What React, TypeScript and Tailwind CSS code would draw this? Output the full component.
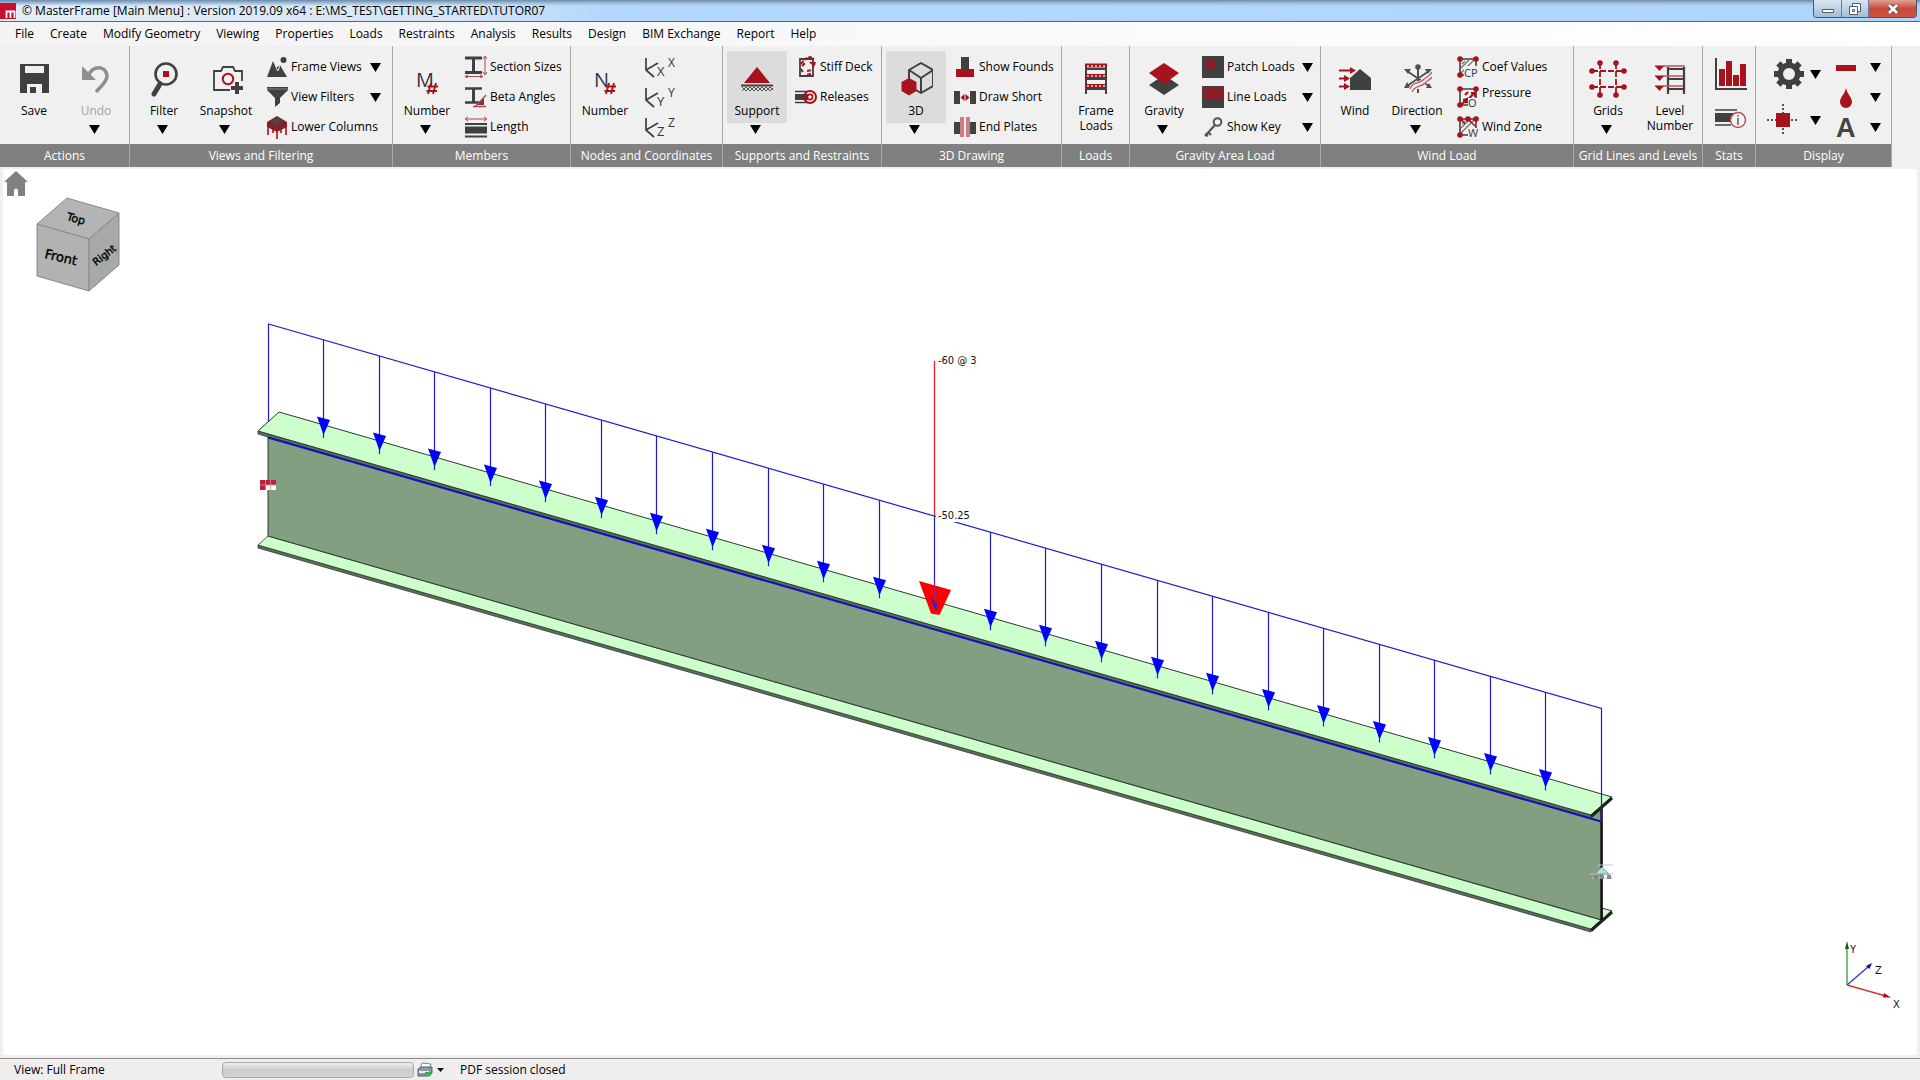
import type { ReactNode } from 'react';

const RED = '#a8121c';
const DARK = '#404040';

const menuItems = [
  'File', 'Create', 'Modify Geometry', 'Viewing', 'Properties', 'Loads', 'Restraints',
  'Analysis', 'Results', 'Design', 'BIM Exchange', 'Report', 'Help',
];

/* ---------- shared ribbon parts ---------- */

function Caret({ label }: { label: string }) {
  return (
    <button type="button" aria-label={`${label} options`} className="flex h-3 w-3 items-center justify-center">
      <svg viewBox="0 0 11 9" className="h-[9px] w-[11px]"><path d="M0 0H11L5.5 9Z" fill="#000" /></svg>
    </button>
  );
}

type BigProps = { icon: ReactNode; label: string; caret?: boolean; active?: boolean; disabled?: boolean };

function BigButton({ icon, label, caret, active, disabled }: BigProps) {
  return (
    <div className="flex w-[60px] shrink-0 flex-col">
      <button
        type="button"
        disabled={disabled}
        className={`flex min-h-[72px] w-full flex-col items-center pt-2 ${active ? 'bg-[#dcdcdc]' : ''} ${disabled ? 'text-[#a3a3a3]' : ''}`}
      >
        <span className="flex h-10 items-center justify-center">{icon}</span>
        <span className="mt-1 text-center leading-[15px]">{label}</span>
      </button>
      {caret && <div className="flex justify-center pr-1"><Caret label={label} /></div>}
    </div>
  );
}

type RowProps = { icon: ReactNode; label: string; caret?: boolean; labelClass?: string };

function SmallButton({ icon, label, caret, labelClass = '' }: RowProps) {
  return (
    <div className="flex h-[30px] items-center justify-between">
      <button type="button" className="flex h-full items-center gap-[3px] whitespace-nowrap">
        <span className="flex w-[22px] justify-center">{icon}</span>
        <span className={labelClass}>{label}</span>
      </button>
      {caret && <Caret label={label} />}
    </div>
  );
}

function Group({ title, width, children }: { title: string; width: string; children: ReactNode }) {
  return (
    <section aria-label={title} className={`flex shrink-0 flex-col border-r border-[#a8a8a8] ${width}`}>
      <div className="flex h-[98px] gap-0.5 pt-[5px] pl-1">{children}</div>
      <h2 className="flex h-[23px] items-center justify-center bg-[#808080] whitespace-nowrap text-white">{title}</h2>
    </section>
  );
}

function Column({ className, children }: { className: string; children: ReactNode }) {
  return <div className={`flex flex-col pt-px ${className}`}>{children}</div>;
}

/* ---------- icons ---------- */

const SaveIcon = () => (
  <svg viewBox="0 0 29 30" className="h-[30px] w-[29px]">
    <path fillRule="evenodd" fill={DARK} d="M0 0H29V29H0ZM5 2V9H24V2ZM7 20V29H10V23H16V29H22V20Z" />
    <path fill={DARK} d="M10 23H16V29H10ZM5 14H24V20H5Z" />
  </svg>
);

const UndoIcon = () => (
  <svg viewBox="0 0 30 30" className="h-[30px] w-[30px]">
    <path d="M7 12C12 1 25 1 26 12C26 18 20 22 15 28" fill="none" stroke="#8f8f8f" strokeWidth="3.6" />
    <path d="M1 2V16H15Z" fill="#8f8f8f" />
  </svg>
);

const FilterIcon = () => (
  <svg viewBox="0 0 30 36" className="h-9 w-[30px]">
    <circle cx="17" cy="13" r="10.5" fill="none" stroke={DARK} strokeWidth="2.6" />
    <path d="M11 23L5 33" stroke={DARK} strokeWidth="5" strokeLinecap="round" />
    <path d="M14 10H20V16H14Z" fill={RED} />
  </svg>
);

const SnapshotIcon = () => (
  <svg viewBox="-4 -1 36 30" className="h-[30px] w-9">
    <path d="M18 25H2V6H9L11 2H21L23 6H30V16" fill="none" stroke={DARK} strokeWidth="1.8" />
    <circle cx="16" cy="14" r="5.2" fill="none" stroke={RED} strokeWidth="2" />
    <path d="M25 17V29M19 23H31" stroke={DARK} strokeWidth="4" />
  </svg>
);

const FrameViewsIcon = () => (
  <svg viewBox="0 0 22 22" className="h-[22px] w-[22px]">
    <path d="M1 21L7 5L10 12L14 9L21 21Z" fill={DARK} />
    <path d="M10 12L12 15L14 9" fill="none" stroke="#f0f0f0" strokeWidth="1" />
    <circle cx="17.500" cy="4" r="3" fill={DARK} />
  </svg>
);

const FunnelIcon = () => (
  <svg viewBox="0 0 22 22" className="h-[22px] w-[22px]">
    <path d="M1 1H22V4L14 12V17L9 21V12L1 4Z" fill={DARK} />
    <path d="M1 3H22" stroke="#9a9a9a" strokeWidth="0.8" />
  </svg>
);

const LowerColumnsIcon = () => (
  <svg viewBox="0 0 22 24" className="h-6 w-[22px]">
    <path d="M1 7L11 1L21 7V12L11 17L1 12Z" fill="#7c2429" />
    <path d="M5 6L11 3L17 6L11 10Z" fill="#4b4648" />
    <path d="M2 10V20M20 10V20M11 15V24M7 13V18M15 13V18" stroke={RED} strokeWidth="1.6" />
  </svg>
);

const HashIcon = ({ letter }: { letter: string }) => (
  <svg viewBox="0 0 30 32" className="h-8 w-[30px]">
    <text x="4" y="24" fontSize="20" fill="#2f3848">{letter}</text>
    <path d="M19 20L16 31M24 20L21 31M15.500 23.500H26M14.500 28H25" stroke={RED} strokeWidth="1.9" fill="none" />
  </svg>
);

const SectionIcon = () => (
  <svg viewBox="0 0 22 22" className="h-[22px] w-[22px]">
    <path d="M0 2H17M0 16.500H17" stroke={DARK} strokeWidth="3" />
    <path d="M8.500 2V16" stroke={DARK} strokeWidth="3" />
    <path d="M20 1V18M18 3L20 0L22 3M18 16L20 19L22 16M1 20.500H17M3 19L0 20.500L3 22M15 19L18 20.500L15 22" stroke="#b5444b" fill="none" />
  </svg>
);

const BetaIcon = () => (
  <svg viewBox="0 0 22 22" className="h-[22px] w-[22px]">
    <path d="M0 2.500H17M0 16.500H14" stroke={DARK} strokeWidth="2.600" />
    <path d="M8.500 2V16" stroke={DARK} strokeWidth="3" />
    <path d="M12 19L19 11V19Z" fill="#70393d" />
    <path d="M8 20.500H21M10 21L21 9" stroke="#b5444b" strokeWidth="1.300" />
  </svg>
);

const LengthIcon = () => (
  <svg viewBox="0 0 22 22" className="h-[22px] w-[22px]">
    <path d="M1 3H21M3 1L0 3L3 5M19 1L22 3L19 5" stroke="#b5444b" fill="none" />
    <path d="M0 8H22M0 20.500H22" stroke={DARK} strokeWidth="2" />
    <path d="M0 10.500H22V17.500H0Z" fill={DARK} />
  </svg>
);

const AxisIcon = ({ letter }: { letter: string }) => (
  <svg viewBox="0 -2 36 28" className="h-7 w-9">
    <path d="M3 3V15L11 22M3 15L15 8" fill="none" stroke={DARK} strokeWidth="1.700" />
    <text x="14" y="21" fontSize="13" fill="#2f3848">{letter}</text>
    <text x="25" y="12" fontSize="12" fill="#333">{letter}</text>
  </svg>
);

const SupportIcon = () => (
  <svg viewBox="0 0 34 28" className="h-7 w-[34px]">
    <path d="M17 2L30 18H4Z" fill={RED} />
    <path d="M1 20.500H33" stroke={DARK} strokeWidth="2" />
    <path d="M2 22L6 26L10 22L14 26L18 22L22 26L26 22L30 26L33 23M2 26L6 22L10 26L14 22L18 26L22 22L26 26L30 22L33 25" fill="none" stroke="#555" />
  </svg>
);

const StiffDeckIcon = () => (
  <svg viewBox="0 0 22 22" className="h-[22px] w-[22px]">
    <path d="M5 3H18V20H5Z" fill="none" stroke={DARK} strokeWidth="1.800" />
    <path d="M6 8L10 3L15 1L19 3M20 6L18 12M16 18L11 19M8 16L5 12M15 6L19 9M7 10L10 7M12 15L17 14" stroke={RED} strokeWidth="2" fill="none" strokeDasharray="4 1" />
  </svg>
);

const ReleasesIcon = () => (
  <svg viewBox="0 0 22 22" className="h-[22px] w-[22px]">
    <path d="M0 5.500H12M0 16.500H12" stroke={DARK} strokeWidth="1.600" />
    <path d="M0 8H12V14H0Z" fill={DARK} />
    <circle cx="15" cy="11" r="6" fill="none" stroke={RED} strokeWidth="2" />
    <circle cx="15" cy="11" r="2.600" fill="none" stroke={RED} strokeWidth="1.600" />
    <path d="M9 8H13V14H9Z" fill="#8c1b23" />
  </svg>
);

const CubeIcon = () => (
  <svg viewBox="-2 0 34 36" className="h-9 w-[34px]">
    <path d="M8 9L20 2L32 9V25L20 32L8 25ZM8 9L20 17L32 9M20 17V32" fill="none" stroke={DARK} strokeWidth="2" strokeLinejoin="round" />
    <path d="M8 17L15.500 21V30L8 34.500L0.500 30V21Z" fill={RED} />
  </svg>
);

const FoundsIcon = () => (
  <svg viewBox="0 0 22 22" className="h-[22px] w-[22px]">
    <path d="M7 1H15V13H7Z" fill={DARK} />
    <path d="M2 13H20V21H2Z" fill={RED} />
  </svg>
);

const DrawShortIcon = () => (
  <svg viewBox="0 0 22 22" className="h-[22px] w-[22px]">
    <path d="M0 5H6V18H0ZM16 5H22V18H16Z" fill={DARK} />
    <path d="M10.500 8V15L6.500 11.500ZM11.500 8V15L15.500 11.500Z" fill={RED} />
  </svg>
);

const EndPlatesIcon = () => (
  <svg viewBox="0 0 22 22" className="h-[22px] w-[22px]">
    <path d="M0 6H6V18H0ZM16 6H22V18H16Z" fill={DARK} />
    <path d="M6 1H10V21H6ZM12 1H16V21H12Z" fill="#cf7c82" />
  </svg>
);

const FrameLoadsIcon = () => (
  <svg viewBox="0 0 24 32" className="h-8 w-6">
    <path d="M2 4V31M22 4V31M2 6H22M2 16H22M2 26H22" stroke={DARK} strokeWidth="2" />
    <path d="M1 2.500H23M2 13H22M2 23H22" stroke={RED} strokeWidth="4" />
    <path d="M3 3H22M3 13H22M3 23H22" stroke="#f3dada" strokeWidth="1.600" strokeDasharray="2 2" />
  </svg>
);

const GravityIcon = () => (
  <svg viewBox="0 0 32 34" className="h-[34px] w-8">
    <path d="M16 13L31 23L16 33L1 23Z" fill={DARK} />
    <path d="M16 1L31 11L16 22L1 11Z" fill={RED} />
  </svg>
);

const PatchIcon = () => (
  <svg viewBox="0 0 22 22" className="h-[22px] w-[22px]">
    <path d="M0 0H22V22H0Z" fill={DARK} />
    <path d="M3 3H13V13H3Z" fill="#8a1f27" />
  </svg>
);

const LineLoadIcon = () => (
  <svg viewBox="0 0 22 22" className="h-[22px] w-[22px]">
    <path d="M0 0H22V22H0Z" fill={DARK} />
    <path d="M1 2H21V13H1Z" fill="#8a1f27" />
  </svg>
);

const KeyIcon = () => (
  <svg viewBox="0 0 22 22" className="h-[22px] w-[22px]">
    <circle cx="15.500" cy="6" r="3.800" fill="none" stroke="#555" strokeWidth="2" />
    <path d="M13 9L3 20M6 16L9 19M3 18L6 20" stroke="#555" strokeWidth="2.200" fill="none" />
  </svg>
);

const WindIcon = () => (
  <svg viewBox="0 0 34 26" className="h-[26px] w-[34px]">
    <path d="M12 12L22 3L33 12V24H12Z" fill={DARK} />
    <path d="M1 4.500H14M1 12.500H7M1 20.500H7" stroke={RED} strokeWidth="2" />
    <path d="M12 1L18 4.500L12 8ZM6 9L12 12.500L6 16ZM6 17L12 20.500L6 24Z" fill={RED} />
  </svg>
);

const DirectionIcon = () => (
  <svg viewBox="-2 0 30 30" className="h-[30px] w-[30px]">
    <path d="M14 4V18M14 25V29M3 7L25 22M25 7L3 22" stroke="#505050" strokeWidth="2" />
    <circle cx="14" cy="3" r="2.800" fill="#505050" />
    <path d="M0 5L7 5L4 10ZM28 5L21 5L24 10ZM0 24L7 24L3 18ZM28 24L22 24L25 19Z" fill="#505050" />
    <path d="M7 26C11 18 14 22 19 18C23 15 25 14 29 9" stroke="#f0f0f0" strokeWidth="6" fill="none" />
    <path d="M6 25C10 16 14 21 19 16C22 13 25 13 28 8M8 28C12 20 16 24 21 19C24 16 26 16 29 12" stroke="#c05058" strokeWidth="1.300" fill="none" />
  </svg>
);

const ZoneIcon = ({ letter }: { letter: string }) => (
  <svg viewBox="0 0 24 24" className="h-6 w-6 shrink-0">
    <path d="M4 4H20V20H4Z" fill="none" stroke={DARK} strokeWidth="1.600" />
    {letter === 'O' ? (
      <path d="M5 20L11 14M9 18L19 7M9 10L12 7M7 15L11 14V18M15 8H19V12" stroke={RED} strokeWidth="2.200" fill="none" />
    ) : (
      <path d="M5 13L13 5M5 18L18 5M6 9L9 6" stroke="#707070" strokeWidth="1.300" />
    )}
    {letter === 'W' && <path d="M12 4L19 11M6 5L9 9" stroke={RED} strokeWidth="1.500" />}
    <path d={letter === 'CP' ? 'M8 11H24V24H8Z' : 'M12 13H24V24H12Z'} fill="#f0f0f0" />
    <circle cx="4" cy="4" r="2.800" fill={RED} />
    <circle cx="20" cy="4" r="2.800" fill={RED} />
    {letter === 'W' && <circle cx="12" cy="4" r="2.800" fill={RED} />}
    <circle cx="4" cy="20" r="2.800" fill={RED} />
    <text x={letter === 'CP' ? 8 : 12} y="22" fontSize="11" fill="#2f3848">{letter}</text>
  </svg>
);

const GridsIcon = () => (
  <svg viewBox="0 0 38 38" className="h-[38px] w-[38px]">
    <path d="M11 3V35M27 3V35M3 11H35M3 27H35" stroke={RED} strokeWidth="1.800" strokeDasharray="6 2" />
    {[11, 27].map((p) => (
      <g key={p} fill={RED}>
        <circle cx={p} cy="3" r="2.800" />
        <circle cx={p} cy="35" r="2.800" />
        <circle cx="3" cy={p} r="2.800" />
        <circle cx="35" cy={p} r="2.800" />
      </g>
    ))}
  </svg>
);

const LevelIcon = () => (
  <svg viewBox="0 0 32 32" className="h-8 w-8">
    <path d="M14 4V31M30 4V31M14 6H30M14 16H30M14 26H30" stroke={DARK} strokeWidth="2.200" />
    <path d="M1 3H31M1 13H29M1 23H29" stroke="#c05058" strokeWidth="1.300" />
    <path d="M1 3H10L5.500 8ZM1 13H10L5.500 18ZM1 23H10L5.500 28Z" fill={RED} />
  </svg>
);

const ChartIcon = () => (
  <svg viewBox="0 0 32 34" className="h-[34px] w-8">
    <path d="M1 1V32H32" fill="none" stroke={DARK} strokeWidth="2" />
    <path d="M4 12H10V29H4ZM11 4H17V29H11ZM18 18H24V29H18ZM25 7H31V29H25Z" fill={RED} />
  </svg>
);

const InfoBarIcon = () => (
  <svg viewBox="0 0 32 22" className="h-[22px] w-8">
    <path d="M0 3H22M0 18H16" stroke={DARK} strokeWidth="1.600" />
    <path d="M0 6H20V15H0Z" fill={DARK} />
    <circle cx="23" cy="13" r="7.500" fill="#f4f4f4" stroke="#c05058" strokeWidth="1.500" />
    <path d="M23 8V9.500M23 11V18" stroke="#555" strokeWidth="1.500" />
  </svg>
);

const GearIcon = () => (
  <svg viewBox="-15 -15 30 30" className="h-[30px] w-[30px]">
    {[0, 45, 90, 135].map((a) => (
      <path key={a} d="M-3 -15H3V15H-3Z" fill={DARK} transform={`rotate(${a})`} />
    ))}
    <circle r="11.500" fill={DARK} />
    <circle r="6" fill="#f0f0f0" />
  </svg>
);

const NodeIcon = () => (
  <svg viewBox="0 0 34 34" className="h-[34px] w-[34px]">
    <path d="M17 1V33M1 17H33" stroke="#222" strokeWidth="1.500" strokeDasharray="2 2" />
    <path d="M10 10H24V24H10Z" fill={RED} />
  </svg>
);

const DashIcon = () => (
  <svg viewBox="0 0 22 22" className="h-[22px] w-[22px]"><path d="M1 9H21V15H1Z" fill={RED} /></svg>
);

const DropIcon = () => (
  <svg viewBox="0 0 22 22" className="h-[22px] w-[22px]">
    <path d="M11 2C12 8 17 11 17 16A6 6 0 0 1 5 16C5 11 10 8 11 2Z" fill={RED} />
  </svg>
);

const FontIcon = () => (
  <svg viewBox="0 0 22 22" className="h-[22px] w-[22px]">
    <text x="1" y="21" fontSize="27" fontWeight="700" fill="#444" className="font-['Liberation_Sans',sans-serif]">A</text>
  </svg>
);

/* ---------- window chrome ---------- */

function TitleBar() {
  return (
    <header className="flex h-[22px] items-center justify-between border-b border-[#4c6a88] bg-[linear-gradient(to_bottom,#6d8ba6_0,#9dbddb_3px,transparent_6px),linear-gradient(to_right,#e3edf7_0,#d5e5f5_460px,#b4d8fc_600px,#b0d5fa_100%)]">
      <div className="flex items-center gap-1.5">
        <svg viewBox="0 0 16 16" className="h-4 w-4">
          <path d="M0 0H16V16H0Z" fill="#c8102e" />
          <path d="M6.500 15V8.500H14.500V15M10.500 8.500V15" fill="none" stroke="#fff" strokeWidth="1.800" />
        </svg>
        <h1>© MasterFrame [Main Menu] : Version 2019.09 x64 : E:\MS_TEST\GETTING_STARTED\TUTOR07</h1>
      </div>
      <div className="mr-[3px] flex h-[18px] self-start overflow-hidden rounded-b border border-t-0 border-[#4a5a6c]">
        <button type="button" aria-label="Minimize" className="flex w-7 items-center justify-center border-r border-[#6a7e94] bg-linear-to-b from-[#d8e6f3] to-[#a3bdd6]">
          <svg viewBox="0 0 12 12" className="h-3 w-3"><path d="M0.500 6.500H11.500V9.500H0.500Z" fill="#fff" stroke="#555b66" /></svg>
        </button>
        <button type="button" aria-label="Restore" className="flex w-[27px] items-center justify-center border-r border-[#6a7e94] bg-linear-to-b from-[#d8e6f3] to-[#a3bdd6]">
          <svg viewBox="0 0 12 12" className="h-3 w-3">
            <path d="M3.500 0.500H11.500V8.500H3.500Z" fill="#fff" stroke="#555b66" />
            <path d="M0.500 3.500H8.500V11.500H0.500ZM3.500 6.500H5.500V8.500H3.500Z" fill="#fff" stroke="#555b66" />
          </svg>
        </button>
        <button type="button" aria-label="Close" className="flex w-[47px] items-center justify-center bg-linear-to-b from-[#dfa093] via-[#c8493a] to-[#c9543f]">
          <svg viewBox="0 0 12 10" className="h-2.5 w-3">
            <path d="M2 1L10 9M10 1L2 9" stroke="#5d3f40" strokeWidth="4.500" />
            <path d="M2 1L10 9M10 1L2 9" stroke="#fff" strokeWidth="2.800" />
          </svg>
        </button>
      </div>
    </header>
  );
}

function MenuBar() {
  return (
    <nav aria-label="Main menu" className="flex h-6 items-center gap-4 bg-linear-to-r from-[#f3f3f3] to-white pl-[15px]">
      {menuItems.map((item) => (
        <button key={item} type="button" className="whitespace-nowrap">{item}</button>
      ))}
    </nav>
  );
}

function Ribbon() {
  return (
    <div className="flex bg-[#f0f0f0] pb-0.5">
      <Group title="Actions" width="w-[130px]">
        <BigButton icon={<SaveIcon />} label="Save" />
        <BigButton icon={<UndoIcon />} label="Undo" caret disabled />
      </Group>
      <Group title="Views and Filtering" width="w-[263px]">
        <BigButton icon={<FilterIcon />} label="Filter" caret />
        <BigButton icon={<SnapshotIcon />} label="Snapshot" caret />
        <Column className="ml-2 w-[115px]">
          <SmallButton icon={<FrameViewsIcon />} label="Frame Views" caret />
          <SmallButton icon={<FunnelIcon />} label="View Filters" caret />
          <SmallButton icon={<LowerColumnsIcon />} label="Lower Columns" />
        </Column>
      </Group>
      <Group title="Members" width="w-[178px]">
        <BigButton icon={<HashIcon letter="M" />} label="Number" caret />
        <Column className="ml-1.5">
          <SmallButton icon={<SectionIcon />} label="Section Sizes" />
          <SmallButton icon={<BetaIcon />} label="Beta Angles" />
          <SmallButton icon={<LengthIcon />} label="Length" />
        </Column>
      </Group>
      <Group title="Nodes and Coordinates" width="w-[152px]">
        <BigButton icon={<HashIcon letter="N" />} label="Number" />
        <Column className="ml-1.5">
          {['X', 'Y', 'Z'].map((axis) => (
            <button key={axis} type="button" className="flex h-[30px] items-center" aria-label={`${axis} coordinate`}>
              <AxisIcon letter={axis} />
            </button>
          ))}
        </Column>
      </Group>
      <Group title="Supports and Restraints" width="w-[159px]">
        <BigButton icon={<SupportIcon />} label="Support" caret active />
        <Column className="ml-1.5">
          <SmallButton icon={<StiffDeckIcon />} label="Stiff Deck" />
          <SmallButton icon={<ReleasesIcon />} label="Releases" />
        </Column>
      </Group>
      <Group title="3D Drawing" width="w-[180px]">
        <BigButton icon={<CubeIcon />} label="3D" caret active />
        <Column className="ml-1.5">
          <SmallButton icon={<FoundsIcon />} label="Show Founds" />
          <SmallButton icon={<DrawShortIcon />} label="Draw Short" />
          <SmallButton icon={<EndPlatesIcon />} label="End Plates" />
        </Column>
      </Group>
      <Group title="Loads" width="w-[68px]">
        <BigButton icon={<FrameLoadsIcon />} label="Frame Loads" />
      </Group>
      <Group title="Gravity Area Load" width="w-[191px]">
        <BigButton icon={<GravityIcon />} label="Gravity" caret />
        <Column className="ml-1.5 w-[111px]">
          <SmallButton icon={<PatchIcon />} label="Patch Loads" caret />
          <SmallButton icon={<LineLoadIcon />} label="Line Loads" caret />
          <SmallButton icon={<KeyIcon />} label="Show Key" caret />
        </Column>
      </Group>
      <Group title="Wind Load" width="w-[253px]">
        <BigButton icon={<WindIcon />} label="Wind" />
        <BigButton icon={<DirectionIcon />} label="Direction" caret />
        <Column className="ml-2">
          <SmallButton icon={<ZoneIcon letter="CP" />} label="Coef Values" />
          <SmallButton icon={<ZoneIcon letter="O" />} label="Pressure" labelClass="pb-2" />
          <SmallButton icon={<ZoneIcon letter="W" />} label="Wind Zone" />
        </Column>
      </Group>
      <Group title="Grid Lines and Levels" width="w-[129px]">
        <BigButton icon={<GridsIcon />} label="Grids" caret />
        <BigButton icon={<LevelIcon />} label="Level Number" />
      </Group>
      <Group title="Stats" width="w-[53px]">
        <div className="flex flex-col gap-4 pt-1.5 pl-2">
          <button type="button" aria-label="Charts"><ChartIcon /></button>
          <button type="button" aria-label="Member info"><InfoBarIcon /></button>
        </div>
      </Group>
      <Group title="Display" width="w-[136px]">
        <div className="flex w-[61px] flex-col gap-3 pt-1.5 pl-1.5">
          <div className="flex h-[34px] items-center justify-between pl-2">
            <button type="button" aria-label="Settings"><GearIcon /></button>
            <Caret label="Settings" />
          </div>
          <div className="flex h-[34px] items-center justify-between">
            <button type="button" aria-label="Nodes"><NodeIcon /></button>
            <Caret label="Nodes" />
          </div>
        </div>
        <Column className="ml-3 w-[46px]">
          {[
            { name: 'Line style', icon: <DashIcon /> },
            { name: 'Colour', icon: <DropIcon /> },
            { name: 'Font', icon: <FontIcon /> },
          ].map(({ name, icon }) => (
            <div key={name} className="flex h-[30px] items-center justify-between">
              <button type="button" aria-label={name}>{icon}</button>
              <Caret label={name} />
            </div>
          ))}
        </Column>
      </Group>
    </div>
  );
}

/* ---------- model view ---------- */

const SEGMENTS = 24;
const loadX = (i: number) => 268 + (i * 1333.5) / SEGMENTS;
const loadY = (i: number) => 324 + (i * 384.5) / SEGMENTS;

function BeamModel() {
  const arrows = Array.from({ length: SEGMENTS - 1 }, (_, i) => i + 1);
  return (
    <g>
      {/* bottom flange */}
      <path d="M1602 908L1612 911L1602 920Z" fill="#ccffcc" stroke="#2f3a2f" />
      <path d="M258 545L1591 929V932L258 548Z" fill="#5a6e5a" stroke="#2f3a2f" strokeWidth="0.8" />
      <path d="M258 545L268 536L1601 920L1591 929Z" fill="#ccffcc" stroke="#2f3a2f" strokeWidth="0.8" />
      <path d="M1591 930.500L1612 912" stroke="#1c221c" strokeWidth="3" />
      {/* web */}
      <path d="M268 434L1602 806V920L268 536Z" fill="#829f82" stroke="#2f3a2f" />
      <path d="M1601.500 806V920" stroke="#111" strokeWidth="2.400" />
      {/* top flange */}
      <path d="M258 431L1591 815V818L258 434Z" fill="#5a6e5a" stroke="#2f3a2f" strokeWidth="0.8" />
      <path d="M258 431L279 412L1612 797L1591 815Z" fill="#ccffcc" stroke="#2f3a2f" />
      <path d="M1591 816.500L1612 798" stroke="#1c221c" strokeWidth="3" />
      <path d="M268 437.500L1601 821.500" stroke="#1010c0" strokeWidth="2" />
      {/* distributed load */}
      <path d="M268.500 422V324L1601.500 708.500V822" fill="none" stroke="#1c1ccc" strokeWidth="1.200" />
      {arrows.map((i) => {
        const x = Math.floor(loadX(i)) + 0.5;
        const y = loadY(i);
        return (
          <g key={i}>
            <path d={`M${x} ${y}V${y + 98}`} stroke="#1c1ccc" strokeWidth="1.200" />
            {i !== 12 && <path d={`M${x - 6.5} ${y + 76.5}L${x + 6.5} ${y + 80}L${x} ${y + 95}Z`} fill="#0000ff" />}
          </g>
        );
      })}
      {/* point load */}
      <path d="M934.500 361V516" stroke="#f02020" strokeWidth="1.300" />
      <path d="M919 581L951 590L939.500 615L931 613.500Z" fill="#ff0000" />
      <path d="M934.500 580V600" stroke="#a02080" strokeWidth="1.200" />
      <path d="M931 597L937 604V611L933 606Z" fill="#3a20c0" />
      <path d="M936 509H970V522H936Z" fill="#fff" />
      <g fontSize="11" className="font-['DejaVu_Sans_Condensed','DejaVu_Sans',sans-serif]" fill="#111">
        <text x="938" y="364">-60 @ 3</text>
        <text x="938" y="519">-50.25</text>
      </g>
      {/* supports */}
      <path d="M260 480H276V490H260Z" fill="#c0203c" />
      <path d="M266 485H276V490H266Z" fill="#fff" />
      <path d="M265.500 480V490M270.500 480V490M260 485H276" stroke="#d88c96" strokeWidth="0.8" />
      <path d="M1590 874H1613M1592 878H1613M1598 865H1613" stroke="#c4c4c4" />
      <path d="M1595 874L1602 867L1609 874Z" fill="#a5e0e0" stroke="#8a9a9a" />
      <path d="M1594 875H1598V879H1594ZM1600 875H1604V879H1600ZM1607 875H1611V879H1607Z" fill="#8a8488" />
    </g>
  );
}

function ViewCube() {
  return (
    <g>
      <path d="M16 171L28 182H25V196H18V190Q16 187 14 190V196H7V182H4Z" fill="#808080" />
      <g stroke="#8a8a8a" strokeLinejoin="round">
        <path d="M37 224L67 198L119 213L89 239Z" fill="#b4b4b4" />
        <path d="M37 224L89 239V291L37 276Z" fill="#b2b2b2" />
        <path d="M89 239L119 213V265L89 291Z" fill="#a8a8a8" />
      </g>
      <g fill="#000" stroke="#000" strokeWidth="0.4" fontSize="13" className="font-['DejaVu_Sans',sans-serif]">
        <text transform="translate(44 258) rotate(13)">Front</text>
        <text transform="translate(96 266) rotate(-38)" fontSize="10">Right</text>
        <text transform="translate(66 220) rotate(15)" fontSize="11">Top</text>
      </g>
    </g>
  );
}

function AxisTriad() {
  return (
    <g strokeWidth="1.300">
      <path d="M1847 985V948" stroke="#30a040" />
      <path d="M1847 941L1849 949H1845Z" fill="#0c5c18" />
      <path d="M1847 985L1868 967" stroke="#3030e0" />
      <path d="M1872 963L1869.500 969L1866 966Z" fill="#1010a0" />
      <path d="M1847 985L1884 995.500" stroke="#e03030" />
      <path d="M1891 997.500L1883 997.500L1884 993Z" fill="#b00c0c" />
      <g fontSize="11" fill="#111" className="font-['DejaVu_Sans_Condensed','DejaVu_Sans',sans-serif]">
        <text x="1850" y="953">Y</text>
        <text x="1875" y="974">Z</text>
        <text x="1893" y="1008">X</text>
      </g>
    </g>
  );
}

function ModelView() {
  return (
    <main className="flex flex-1 bg-[#f0f0f0] px-[3px] pb-[3px]">
      <svg viewBox="3 169 1914 886" role="img" aria-label="Beam model" className="min-w-0 flex-1 bg-white">
        <ViewCube />
        <BeamModel />
        <AxisTriad />
      </svg>
    </main>
  );
}

function StatusBar() {
  return (
    <footer className="flex h-[22px] items-center border-t border-[#8c8c8c] bg-[#f0eeec] pl-3.5">
      <span className="w-52">View: Full Frame</span>
      <div
        role="progressbar"
        aria-label="Progress"
        aria-valuenow={0}
        className="h-4 w-48 rounded-sm border border-[#a8a8a8] bg-linear-to-b from-[#efefef] via-[#cbcbcb] to-[#d6d6d6]"
      />
      <button type="button" aria-label="Print" className="ml-[3px] flex items-center gap-1">
        <svg viewBox="0 0 16 16" className="h-4 w-4">
          <path d="M5 1L14 2L12 7H3Z" fill="#fff" stroke="#6e86a8" />
          <path d="M1 7L4 5H15V11L12 14H1Z" fill="#8a9aad" stroke="#4d5d74" />
          <path d="M2 9H12V11H2Z" fill="#e8eef5" />
          <path d="M8 10H14V14H8Z" fill="#35b04a" />
        </svg>
        <svg viewBox="0 0 7 4" className="h-1 w-[7px]"><path d="M0 0H7L3.500 4Z" fill="#111" /></svg>
      </button>
      <span className="ml-4">PDF session closed</span>
    </footer>
  );
}

function App() {
  return (
    <div className="flex min-h-screen flex-col overflow-x-hidden bg-[#f0f0f0] font-['Open_Sans','Noto_Sans',sans-serif] text-xs text-black">
      <TitleBar />
      <MenuBar />
      <Ribbon />
      <ModelView />
      <StatusBar />
    </div>
  );
}

export default App;
